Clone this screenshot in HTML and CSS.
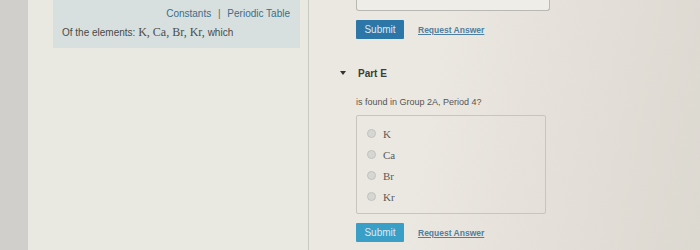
FILE: index.html
```html
<!DOCTYPE html>
<html lang="en">
<head>
    <meta charset="UTF-8">
    <title>Part E</title>
    <link rel="stylesheet" href="styles.css">
</head>
<body>
    <div class="gutter"></div>

    <div class="sidebar">
        <div class="info-box">
            <div class="links">
                <a href="#">Constants</a>
                <span class="sep">|</span>
                <a href="#">Periodic Table</a>
            </div>
            <p class="intro">Of the elements: <span class="el">K, Ca, Br, Kr,</span> which</p>
        </div>
    </div>

    <div class="main">
        <div class="answer-box"></div>
        <div class="actions">
            <button class="submit">Submit</button>
            <a class="request" href="#">Request Answer</a>
        </div>

        <div class="part-head">
            <span class="caret"></span>
            <span class="part-title">Part E</span>
        </div>

        <div class="part-body">
            <p class="question">is found in Group 2A, Period 4?</p>
            <div class="options">
                <label class="option"><span class="radio"></span><span class="el">K</span></label>
                <label class="option"><span class="radio"></span><span class="el">Ca</span></label>
                <label class="option"><span class="radio"></span><span class="el">Br</span></label>
                <label class="option"><span class="radio"></span><span class="el">Kr</span></label>
            </div>
            <div class="actions bottom">
                <button class="submit light">Submit</button>
                <a class="request" href="#">Request Answer</a>
            </div>
        </div>
    </div>
</body>
</html>
```

FILE: styles.css
```css
html, body {
    margin: 0;
    height: 100%;
}

body {
    display: flex;
    font-family: "Liberation Sans", Arial, sans-serif;
    background: linear-gradient(100deg, #e9e8e1 0%, #ebe8e1 60%, #e2ddd6 85%, #dcd9d1 100%);
    overflow: hidden;
}

.gutter {
    width: 28px;
    background-color: #d0cfcb;
    flex-shrink: 0;
}

.sidebar {
    width: 280px;
    flex-shrink: 0;
    border-right: 1px solid #c9c8c2;
    background-color: #e9e8e1;
}

.info-box {
    margin-left: 25px;
    width: 247px;
    height: 48px;
    background-color: #d7e0de;
    box-sizing: border-box;
    padding: 8px 0 0 9px;
}

.links {
    text-align: right;
    padding-right: 10px;
    font-size: 10px;
    color: #3b6d8c;
}

.links a {
    color: #3b6d8c;
    text-decoration: none;
}

.links .sep {
    color: #666;
    margin: 0 4px;
}

.intro {
    margin: 6px 0 0;
    font-size: 10px;
    color: #4a4a48;
}

.el {
    font-family: "Liberation Serif", "Times New Roman", serif;
    font-size: 12px;
    color: #4c4c4a;
}

.main {
    flex: 1;
    padding-left: 47px;
}

.answer-box {
    width: 192px;
    height: 12px;
    margin-top: -2px;
    border: 1px solid #b9b8b2;
    border-top: none;
    border-radius: 0 0 3px 3px;
    background-color: #eeede7;
}

.actions {
    display: flex;
    align-items: center;
    gap: 14px;
    margin-top: 9px;
}

.submit {
    width: 48px;
    height: 19px;
    padding: 0;
    border: none;
    border-radius: 1px;
    background-color: #2c77a8;
    color: #dce8f0;
    font-family: "Liberation Sans", Arial, sans-serif;
    font-size: 10px;
}

.submit.light {
    background-color: #3a9fc6;
}

.request {
    font-size: 8.5px;
    font-weight: bold;
    color: #4e7ea0;
    text-decoration: underline;
}

.part-head {
    display: flex;
    align-items: center;
    margin-top: 27px;
    margin-left: -16px;
    height: 14px;
}

.caret {
    width: 0;
    height: 0;
    border-left: 3px solid transparent;
    border-right: 3px solid transparent;
    border-top: 4px solid #333;
    margin-right: 12px;
}

.part-title {
    font-size: 10px;
    font-weight: bold;
    color: #3c3c3a;
}

.question {
    margin: 17px 0 0;
    font-size: 9px;
    color: #555;
}

.options {
    width: 190px;
    height: 99px;
    margin-top: 8px;
    border: 1px solid #c6c5bf;
    border-radius: 2px;
    box-sizing: border-box;
    padding: 10px 0 0 10px;
    display: flex;
    flex-direction: column;
    gap: 6px;
}

.option {
    display: flex;
    align-items: center;
    height: 15px;
}

.option .el {
    font-size: 11px;
    color: #5a5a58;
}

.radio {
    width: 7px;
    height: 7px;
    border-radius: 50%;
    background-color: #d6d6d2;
    border: 1px solid #c2c2be;
    margin-right: 7px;
}

.actions.bottom {
    margin-top: 9px;
}
```
